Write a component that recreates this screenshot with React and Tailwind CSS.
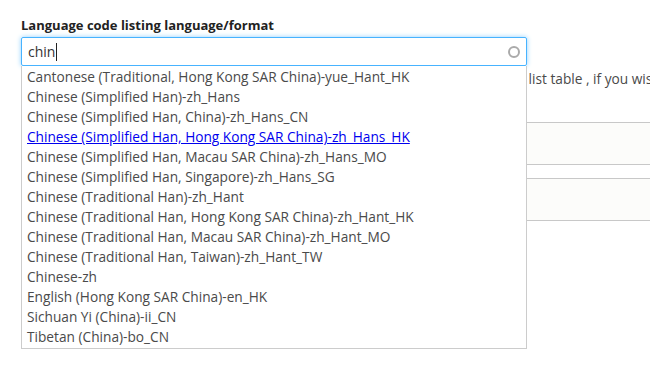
import React from 'react';

const items = [
  'Cantonese (Traditional, Hong Kong SAR China)-yue_Hant_HK',
  'Chinese (Simplified Han)-zh_Hans',
  'Chinese (Simplified Han, China)-zh_Hans_CN',
  'Chinese (Simplified Han, Hong Kong SAR China)-zh_Hans_HK',
  'Chinese (Simplified Han, Macau SAR China)-zh_Hans_MO',
  'Chinese (Simplified Han, Singapore)-zh_Hans_SG',
  'Chinese (Traditional Han)-zh_Hant',
  'Chinese (Traditional Han, Hong Kong SAR China)-zh_Hant_HK',
  'Chinese (Traditional Han, Macau SAR China)-zh_Hant_MO',
  'Chinese (Traditional Han, Taiwan)-zh_Hant_TW',
  'Chinese-zh',
  'English (Hong Kong SAR China)-en_HK',
  'Sichuan Yi (China)-ii_CN',
  'Tibetan (China)-bo_CN',
];

const App = () => {
  return (
    <div className="w-[650px] h-[371px] overflow-hidden bg-white text-[#333] font-['Open_Sans',sans-serif] text-[13.7px]">
      <div className="pl-[21px] pt-[15px]">
        <label className="block font-bold text-[13px] leading-[20px] text-[#222]">
          Language code listing language/format
        </label>
        <div className="relative w-[506px] mt-[2px]">
          <div className="flex items-center h-[29px] border border-[#47b3ff] rounded-[2px] shadow-[0_0_5px_#8fd0ff] pl-[6px] pr-[6px]">
            <span className="text-[14px] text-[#333]">chin</span>
            <span className="w-px h-[18px] bg-[#222] ml-[1px]" />
            <span className="ml-auto w-[12px] h-[12px] rounded-full border-2 border-[#aaa]" />
          </div>
          <ul className="absolute left-0 top-[29px] w-[506px] z-10 bg-white border border-[#ccc] border-t-0 py-[1px]">
            {items.map((it, i) => (
              <li key={it} className="h-[20px] leading-[20px] pl-[5px] whitespace-nowrap">
                {i === 3 ? (
                  <a href="#" className="text-[#0000ee] underline">{it}</a>
                ) : (
                  <span className="text-[#4a4a4a]">{it}</span>
                )}
              </li>
            ))}
          </ul>
        </div>
        <p className="mt-[3px] leading-[20px] whitespace-nowrap text-[#4a4a4a]">
          Select the languages you would like to show on this page,{'\u00a0'} in the language code list table , if you wish to filter it.
        </p>
        <div className="mt-[33px] w-[629px]">
          <div className="h-[43px] bg-[#fcfcfa] border-y border-[#c8c8c8]" />
          <div className="h-[14px] border-b border-[#c8c8c8]" />
          <div className="h-[42px] bg-[#fcfcfa] border-b border-[#c8c8c8]" />
        </div>
      </div>
    </div>
  );
};

export default App;
